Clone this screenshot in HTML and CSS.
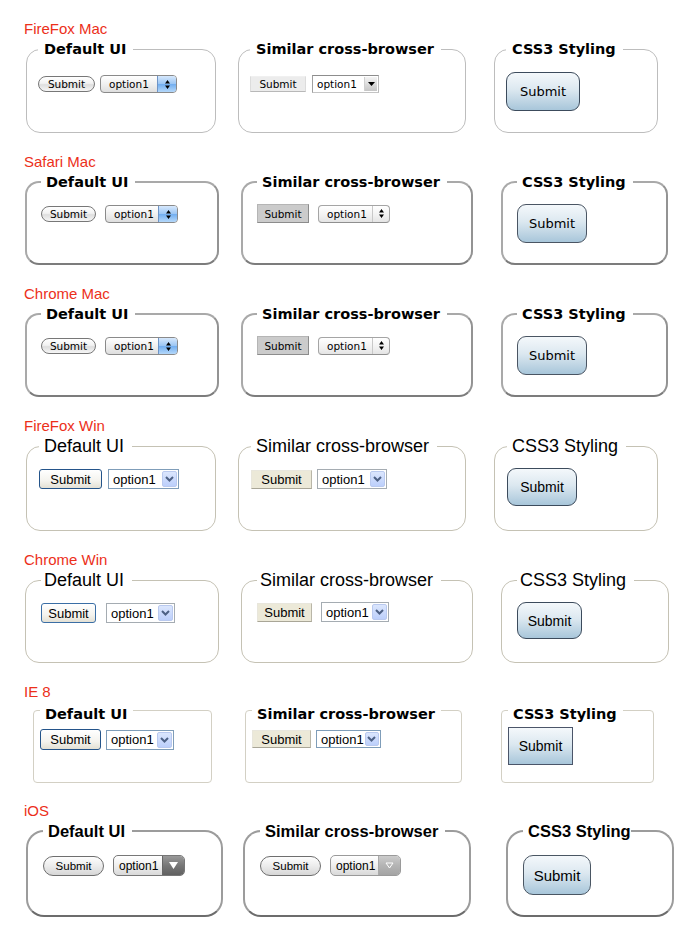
FILE: index.html
```html
<!DOCTYPE html>
<html lang="en">
<head>
  <meta charset="UTF-8">
  <title>Form controls across browsers</title>
  <link rel="stylesheet" href="styles.css">
</head>
<body>

  <!-- FireFox Mac -->
  <section class="group mac ffmac">
    <h2 class="browser">FireFox Mac</h2>
    <div class="sets">
      <fieldset class="set set-default">
        <legend>Default UI</legend>
        <div class="controls">
          <button class="btn btn-aqua">Submit</button>
          <span class="sel sel-aqua"><span class="sel-text">option1</span><span class="sel-arrow"><svg width="7" height="11" viewBox="0 0 7 11"><path d="M3.5 1 6 4.5H1zM3.5 10 1 6.5h5z"/></svg></span></span>
        </div>
      </fieldset>
      <fieldset class="set set-cross">
        <legend>Similar cross-browser</legend>
        <div class="controls">
          <button class="btn btn-flat">Submit</button>
          <span class="sel sel-ffmac"><span class="sel-text">option1</span><span class="sel-arrow"><svg width="7" height="4" viewBox="0 0 7 4"><path d="M0 0h7L3.5 4z"/></svg></span></span>
        </div>
      </fieldset>
      <fieldset class="set set-css3">
        <legend>CSS3 Styling</legend>
        <div class="controls">
          <button class="btn btn-css3">Submit</button>
        </div>
      </fieldset>
    </div>
  </section>

  <!-- Safari Mac -->
  <section class="group mac webkit safari">
    <h2 class="browser">Safari Mac</h2>
    <div class="sets">
      <fieldset class="set set-default">
        <legend>Default UI</legend>
        <div class="controls">
          <button class="btn btn-aqua">Submit</button>
          <span class="sel sel-aqua"><span class="sel-text">option1</span><span class="sel-arrow"><svg width="7" height="11" viewBox="0 0 7 11"><path d="M3.5 1 6 4.5H1zM3.5 10 1 6.5h5z"/></svg></span></span>
        </div>
      </fieldset>
      <fieldset class="set set-cross">
        <legend>Similar cross-browser</legend>
        <div class="controls">
          <button class="btn btn-grey">Submit</button>
          <span class="sel sel-webkit"><span class="sel-text">option1</span><span class="sel-arrow"><svg width="7" height="11" viewBox="0 0 7 11"><path d="M3.5 1 6 4.5H1zM3.5 10 1 6.5h5z"/></svg></span></span>
        </div>
      </fieldset>
      <fieldset class="set set-css3">
        <legend>CSS3 Styling</legend>
        <div class="controls">
          <button class="btn btn-css3">Submit</button>
        </div>
      </fieldset>
    </div>
  </section>

  <!-- Chrome Mac -->
  <section class="group mac webkit chromemac">
    <h2 class="browser">Chrome Mac</h2>
    <div class="sets">
      <fieldset class="set set-default">
        <legend>Default UI</legend>
        <div class="controls">
          <button class="btn btn-aqua">Submit</button>
          <span class="sel sel-aqua"><span class="sel-text">option1</span><span class="sel-arrow"><svg width="7" height="11" viewBox="0 0 7 11"><path d="M3.5 1 6 4.5H1zM3.5 10 1 6.5h5z"/></svg></span></span>
        </div>
      </fieldset>
      <fieldset class="set set-cross">
        <legend>Similar cross-browser</legend>
        <div class="controls">
          <button class="btn btn-grey">Submit</button>
          <span class="sel sel-webkit"><span class="sel-text">option1</span><span class="sel-arrow"><svg width="7" height="11" viewBox="0 0 7 11"><path d="M3.5 1 6 4.5H1zM3.5 10 1 6.5h5z"/></svg></span></span>
        </div>
      </fieldset>
      <fieldset class="set set-css3">
        <legend>CSS3 Styling</legend>
        <div class="controls">
          <button class="btn btn-css3">Submit</button>
        </div>
      </fieldset>
    </div>
  </section>

  <!-- FireFox Win -->
  <section class="group win ffwin">
    <h2 class="browser">FireFox Win</h2>
    <div class="sets">
      <fieldset class="set set-default">
        <legend>Default UI</legend>
        <div class="controls">
          <button class="btn btn-xp">Submit</button>
          <span class="sel sel-xp"><span class="sel-text">option1</span><span class="sel-arrow"><svg width="9" height="6" viewBox="0 0 9 6"><path d="M1 1l3.5 3.5L8 1" fill="none" stroke="#4d6185" stroke-width="2"/></svg></span></span>
        </div>
      </fieldset>
      <fieldset class="set set-cross">
        <legend>Similar cross-browser</legend>
        <div class="controls">
          <button class="btn btn-beige">Submit</button>
          <span class="sel sel-xp sel-plain"><span class="sel-text">option1</span><span class="sel-arrow"><svg width="9" height="6" viewBox="0 0 9 6"><path d="M1 1l3.5 3.5L8 1" fill="none" stroke="#4d6185" stroke-width="2"/></svg></span></span>
        </div>
      </fieldset>
      <fieldset class="set set-css3">
        <legend>CSS3 Styling</legend>
        <div class="controls">
          <button class="btn btn-css3">Submit</button>
        </div>
      </fieldset>
    </div>
  </section>

  <!-- Chrome Win -->
  <section class="group win chromewin">
    <h2 class="browser">Chrome Win</h2>
    <div class="sets">
      <fieldset class="set set-default">
        <legend>Default UI</legend>
        <div class="controls">
          <button class="btn btn-xp">Submit</button>
          <span class="sel sel-xp sel-plain"><span class="sel-text">option1</span><span class="sel-arrow"><svg width="9" height="6" viewBox="0 0 9 6"><path d="M1 1l3.5 3.5L8 1" fill="none" stroke="#4d6185" stroke-width="2"/></svg></span></span>
        </div>
      </fieldset>
      <fieldset class="set set-cross">
        <legend>Similar cross-browser</legend>
        <div class="controls">
          <button class="btn btn-beige">Submit</button>
          <span class="sel sel-xp sel-plain"><span class="sel-text">option1</span><span class="sel-arrow"><svg width="9" height="6" viewBox="0 0 9 6"><path d="M1 1l3.5 3.5L8 1" fill="none" stroke="#4d6185" stroke-width="2"/></svg></span></span>
        </div>
      </fieldset>
      <fieldset class="set set-css3">
        <legend>CSS3 Styling</legend>
        <div class="controls">
          <button class="btn btn-css3">Submit</button>
        </div>
      </fieldset>
    </div>
  </section>

  <!-- IE 8 -->
  <section class="group win ie8">
    <h2 class="browser">IE 8</h2>
    <div class="sets">
      <fieldset class="set set-default">
        <legend>Default UI</legend>
        <div class="controls">
          <button class="btn btn-xp">Submit</button>
          <span class="sel sel-xp"><span class="sel-text">option1</span><span class="sel-arrow"><svg width="9" height="6" viewBox="0 0 9 6"><path d="M1 1l3.5 3.5L8 1" fill="none" stroke="#4d6185" stroke-width="2"/></svg></span></span>
        </div>
      </fieldset>
      <fieldset class="set set-cross">
        <legend>Similar cross-browser</legend>
        <div class="controls">
          <button class="btn btn-beige">Submit</button>
          <span class="sel sel-xp"><span class="sel-text">option1</span><span class="sel-arrow"><svg width="9" height="6" viewBox="0 0 9 6"><path d="M1 1l3.5 3.5L8 1" fill="none" stroke="#4d6185" stroke-width="2"/></svg></span></span>
        </div>
      </fieldset>
      <fieldset class="set set-css3">
        <legend>CSS3 Styling</legend>
        <div class="controls">
          <button class="btn btn-css3">Submit</button>
        </div>
      </fieldset>
    </div>
  </section>

  <!-- iOS -->
  <section class="group ios">
    <h2 class="browser">iOS</h2>
    <div class="sets">
      <fieldset class="set set-default">
        <legend>Default UI</legend>
        <div class="controls">
          <button class="btn btn-ios">Submit</button>
          <span class="sel sel-ios"><span class="sel-text">option1</span><span class="sel-arrow"><svg width="9" height="7" viewBox="0 0 9 7"><path d="M0 0h9L4.5 7z" fill="#fff"/></svg></span></span>
        </div>
      </fieldset>
      <fieldset class="set set-cross">
        <legend>Similar cross-browser</legend>
        <div class="controls">
          <button class="btn btn-ios">Submit</button>
          <span class="sel sel-ios sel-light"><span class="sel-text">option1</span><span class="sel-arrow"><svg width="9" height="7" viewBox="0 0 9 7"><path d="M1 1h7L4.5 6z" fill="none" stroke="#fff" stroke-width="1"/></svg></span></span>
        </div>
      </fieldset>
      <fieldset class="set set-css3">
        <legend>CSS3 Styling</legend>
        <div class="controls">
          <button class="btn btn-css3">Submit</button>
        </div>
      </fieldset>
    </div>
  </section>

</body>
</html>
```

FILE: styles.css
```css
/* Global */
* { box-sizing: border-box; }
body {
  margin: 0;
  padding-top: 20px;
  background: #fff;
  color: #000;
  font-family: "DejaVu Sans", sans-serif;
}

/* ---------- Browser rows ---------- */
.group { margin-bottom: 20px; }
.browser {
  margin: 0 0 2px 24px;
  font: normal 15px/18px "Liberation Sans", Arial, sans-serif;
  color: #ec301a;
}
.sets { display: flex; align-items: flex-start; }

.set {
  margin: 0;
  min-width: 0;
  border: 1px solid #bdbdbd;
  border-radius: 14px;
}
.set legend {
  padding: 0 7px 0 6px;
  font: bold 14.5px/18px "DejaVu Sans", sans-serif;
}
.controls { display: flex; align-items: center; gap: 5px; }

/* ---------- Buttons ---------- */
.btn {
  display: inline-flex;
  align-items: center;
  justify-content: center;
  padding: 0;
  margin: 0;
  font: inherit;
  color: #000;
  border: 1px solid #888;
  background: #eee;
}
.btn-aqua {
  height: 16px;
  border-color: #777;
  border-radius: 8px;
  background: linear-gradient(#fff, #f2f2f2 45%, #dedede 55%, #f6f6f6);
}
.btn-flat {
  height: 16px;
  border-color: #f0f0f0 #dcdcdc #b8b8b8;
  background: #ececec;
}
.btn-grey {
  height: 19px;
  border-color: #b5b5b5 #8c8c8c #8c8c8c #b5b5b5;
  background: #cbcbcb;
}
.btn-xp {
  height: 20px;
  border-color: #24548a;
  border-radius: 3px;
  background: linear-gradient(#fff, #f4f3ee 60%, #e3e0d4);
}
.btn-beige {
  height: 19px;
  border-color: #e8e6dc #b9b6a8 #a9a697 #e8e6dc;
  background: #ece9d8;
}
.btn-ios {
  height: 20px;
  border-color: #6e6e6e;
  border-radius: 10px;
  background: linear-gradient(#fdfdfd, #ececec 50%, #d6d6d6);
}
.btn-css3 {
  border-color: #3c4b5c;
  border-radius: 9px;
  background: linear-gradient(#f4f8fb, #dce8f0 45%, #a8c6da);
}

/* ---------- Selects ---------- */
.sel {
  display: inline-flex;
  align-items: stretch;
  overflow: hidden;
  border: 1px solid #888;
  background: #fff;
}
.sel-text { flex: 1; display: flex; align-items: center; white-space: nowrap; }
.sel-arrow { display: flex; align-items: center; justify-content: center; }

.sel-aqua {
  height: 18px;
  border-color: #8a8a8a;
  border-radius: 4px;
  background: linear-gradient(#fff, #f0f0f0 50%, #dedede);
}
.sel-aqua .sel-text { padding-left: 8px; }
.sel-aqua .sel-arrow {
  width: 19px;
  border-left: 1px solid #6f94c6;
  background: linear-gradient(#d6e8fc, #9cc6f4 48%, #72aef0 52%, #b4d8fa);
}

.sel-ffmac {
  height: 18px;
  border-color: #8d8d8d #bbb #c4c4c4 #a0a0a0;
}
.sel-ffmac .sel-text { padding-left: 4px; }
.sel-ffmac .sel-arrow {
  width: 13px;
  margin: 1px 1px 1px 0;
  background: linear-gradient(#f4f4f4, #c6c6c6);
  border-left: 1px solid #d0d0d0;
}

.sel-webkit {
  height: 18px;
  border-color: #a5a5a5 #a5a5a5 #8f8f8f;
  border-radius: 4px;
  background: linear-gradient(#fff, #f1f1f1 60%, #e4e4e4);
}
.sel-webkit .sel-text { padding-left: 8px; }
.sel-webkit .sel-arrow { width: 17px; border-left: 1px solid #c8c8c8; }

.sel-xp { height: 20px; border-color: #7f9db9; }
.sel-xp.sel-plain { border-color: #a5acb2; }
.sel-xp .sel-text { padding-left: 4px; }
.sel-xp .sel-arrow {
  width: 15px;
  margin: 1px;
  border: 1px solid #b9c9ef;
  border-radius: 2px;
  background: linear-gradient(#dbe6fd, #bccffb);
}

.sel-ios {
  height: 21px;
  border-color: #777;
  border-radius: 5px;
  background: linear-gradient(#fff, #efefef 50%, #d9d9d9);
}
.sel-ios .sel-text { padding-left: 5px; }
.sel-ios .sel-arrow {
  width: 22px;
  border-left: 1px solid #666;
  background: linear-gradient(#999, #777 50%, #606060);
}
.sel-ios.sel-light { border-color: #9a9a9a; }
.sel-ios.sel-light .sel-arrow {
  border-left-color: #aaa;
  background: linear-gradient(#ccc, #b4b4b4 50%, #a4a4a4);
}

/* ---------- FireFox Mac ---------- */
.mac .controls { font-size: 10.5px; }
.ffmac .set { height: 93px; padding: 17px 11px 0; }
.ffmac .set-default { margin-left: 26px; width: 190px; }
.ffmac .set-cross { margin-left: 22px; width: 228px; }
.ffmac .set-css3 { margin-left: 28px; width: 164px; padding-top: 14px; }
.ffmac .set-default .btn { width: 57px; }
.ffmac .set-default .sel { width: 77px; }
.ffmac .set-cross .controls { gap: 6px; }
.ffmac .set-cross .btn { width: 56px; }
.ffmac .set-cross .sel { width: 67px; }
.ffmac .btn-css3 { width: 74px; height: 39px; font-size: 13px; }

/* ---------- Safari / Chrome Mac ---------- */
.webkit .set {
  height: 92px;
  padding: 14px 14px 0;
  border: 2px solid #a9a9a9;
  border-bottom-color: #7c7c7c;
  border-right-color: #939393;
}
.webkit .set legend { padding: 0 7px 0 5px; }
.webkit .controls { gap: 9px; }
.webkit .set-default { margin-left: 25px; width: 194px; }
.webkit .set-cross { margin-left: 22px; width: 232px; padding-top: 13px; }
.webkit .set-css3 { margin-left: 28px; width: 167px; padding-top: 13px; }
.webkit .set-default .btn { width: 55px; }
.webkit .set-default .sel { width: 73px; }
.webkit .set-cross .btn { width: 52px; }
.webkit .set-cross .sel { width: 72px; }
.webkit .btn-css3 { width: 70px; height: 39px; font-size: 13px; border-color: #4a5563; }

/* ---------- Windows ---------- */
.win .controls { font: 13px "Liberation Sans", Arial, sans-serif; }
.win .btn-css3 { font-size: 14px; }

.ffwin .set, .chromewin .set { border-color: #c5c2b4; }
.ffwin legend, .chromewin legend {
  padding: 0 8px 0 5px;
  font: normal 18px/18px "Liberation Sans", Arial, sans-serif;
}

.ffwin .set { height: 94px; padding: 14px 12px 0; }
.ffwin .set-default { margin-left: 26px; width: 190px; }
.ffwin .set-cross { margin-left: 22px; width: 228px; }
.ffwin .set-css3 { margin-left: 28px; width: 164px; padding-top: 13px; }
.ffwin .set-default .controls { gap: 6px; }
.ffwin .set-default .btn { width: 63px; }
.ffwin .set-default .sel { width: 71px; }
.ffwin .set-cross .btn { width: 61px; }
.ffwin .set-cross .sel { width: 70px; }
.ffwin .btn-css3 { width: 70px; height: 38px; }

.chromewin .set { height: 92px; padding: 14px 15px 0; }
.chromewin legend { padding-left: 3px; }
.chromewin .controls { gap: 10px; }
.chromewin .set-default { margin-left: 25px; width: 194px; }
.chromewin .set-cross { margin-left: 22px; width: 232px; padding-top: 13px; }
.chromewin .set-css3 { margin-left: 28px; width: 168px; padding-top: 13px; }
.chromewin .set-cross .controls { gap: 9px; }
.chromewin .btn { width: 55px; }
.chromewin .btn-xp { border-color: #3a6ea5; }
.chromewin .set-default .sel { width: 69px; }
.chromewin .set-cross .sel { width: 68px; }
.chromewin .btn-css3 { width: 65px; height: 37px; }

/* ---------- IE 8 ---------- */
.ie8 { margin-bottom: 19px; }
.ie8 .browser { margin-bottom: 0; }
.ie8 .sets { margin-top: -3px; }
.ie8 .set {
  height: 85px;
  padding: 6px 6px 0;
  border-color: #d3d0c4;
  border-radius: 4px;
}
.ie8 legend { padding: 7px 6px 0 5px; }
.ie8 .set-default { margin-left: 33px; width: 179px; }
.ie8 .set-cross { margin-left: 33px; width: 217px; padding-top: 7px; }
.ie8 .set-css3 { margin-left: 39px; width: 153px; padding-top: 4px; }
.ie8 .set-default .btn { width: 61px; height: 21px; }
.ie8 .set-default .sel { width: 68px; }
.ie8 .set-cross .btn { width: 59px; height: 18px; }
.ie8 .set-cross .sel { width: 65px; height: 18px; }
.ie8 .btn-css3 { width: 65px; height: 38px; border-radius: 0; border-color: #4b5569; }

/* ---------- iOS ---------- */
.ios { margin-bottom: 0; }
.ios .set {
  height: 95px;
  padding: 15px 15px 0;
  border: 2px solid #9c9c9c;
  border-bottom-color: #6c6c6c;
  border-radius: 18px;
}
.ios legend {
  padding: 0 7px 0 5px;
  font: bold 16.5px/18px "Liberation Sans", Arial, sans-serif;
}
.ios .set-css3 legend { padding-right: 0; }
.ios .controls { gap: 9px; font: 11.5px "Liberation Sans", Arial, sans-serif; }
.ios .sel { font-size: 12px; }
.ios .set-default { margin-left: 26px; width: 197px; }
.ios .set-cross { margin-left: 20px; width: 228px; }
.ios .set-css3 { margin-left: 35px; width: 168px; }
.ios .btn-ios { width: 61px; }
.ios .set-default .sel { width: 72px; }
.ios .set-cross .sel { width: 71px; }
.ios .btn-css3 { width: 68px; height: 40px; font-size: 15px; border-color: #4a5663; border-radius: 10px; }
```
